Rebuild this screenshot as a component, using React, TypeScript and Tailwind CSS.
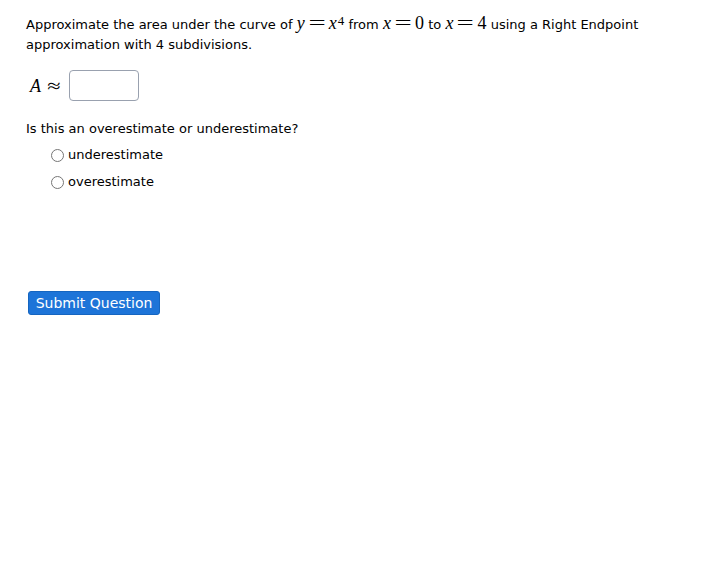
export default function App() {
  const math = { fontFamily: '"Liberation Serif", "DejaVu Serif", serif' };
  const eq = 'mx-[7px] inline-block scale-x-[1.7]';
  return (
    <div className="min-h-[570px] bg-white px-[26px] pt-[14px] text-[13px] leading-[20px] text-black" style={{ fontFamily: '"DejaVu Sans", Verdana, sans-serif' }}>
      <p className="max-w-[650px]">
        Approximate the area under the curve of{' '}
        <span style={math} className="text-[18px] leading-[18px]">
          <i className="italic">y</i>
          <span className={eq}>=</span>
          <i className="italic">x</i>
          <sup className="relative -top-[4px] ml-[1px] text-[13px]">4</sup>
        </span>{' '}
        from{' '}
        <span style={math} className="text-[18px] leading-[18px]">
          <i className="italic">x</i>
          <span className={eq}>=</span>0
        </span>{' '}
        to{' '}
        <span style={math} className="text-[18px] leading-[18px]">
          <i className="italic">x</i>
          <span className={eq}>=</span>4
        </span>{' '}
        using a Right Endpoint approximation with 4 subdivisions.
      </p>

      <div className="mt-[15px] flex items-center pl-[4px]">
        <span style={math} className="text-[18px]">
          <i className="italic">A</i>
          <span className="ml-[8px] inline-block scale-x-[1.35]">≈</span>
        </span>
        <input type="text" className="ml-[10px] h-[31px] w-[70px] rounded-[4px] border border-gray-400 outline-none" />
      </div>

      <p className="mt-[18px]">Is this an overestimate or underestimate?</p>
      <div className="mt-[6px] flex flex-col gap-[7px] pl-[25px]">
        <label className="flex items-center gap-[4px]">
          <input type="radio" name="est" className="m-0 h-[13px] w-[13px]" />
          underestimate
        </label>
        <label className="flex items-center gap-[4px]">
          <input type="radio" name="est" className="m-0 h-[13px] w-[13px]" />
          overestimate
        </label>
      </div>

      <button className="mt-[99px] ml-[2px] h-[24px] w-[132px] rounded-[3px] border border-[#1565c0] bg-[#1d74d8] text-[14px] text-white">
        Submit Question
      </button>
    </div>
  );
}
